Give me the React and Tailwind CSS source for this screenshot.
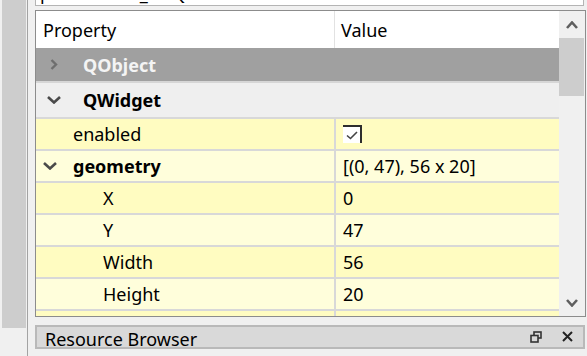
import React from 'react';

const font = { fontFamily: '"Noto Sans", "Liberation Sans", sans-serif' };

function Chevron({ dir = 'down', color = '#4a4a4a', w = 14, h = 8 }) {
  if (dir === 'right') {
    return (
      <svg width="8" height="11" viewBox="0 0 8 11">
        <polyline points="1.5,1 6,5.5 1.5,10" fill="none" stroke={color} strokeWidth="2.4" />
      </svg>
    );
  }
  const pts = dir === 'up' ? `1,${h - 1} ${w / 2},1.5 ${w - 1},${h - 1}` : `1,1 ${w / 2},${h - 1.5} ${w - 1},1`;
  return (
    <svg width={w} height={h} viewBox={`0 0 ${w} ${h}`}>
      <polyline points={pts} fill="none" stroke={color} strokeWidth="2.6" />
    </svg>
  );
}

function CheckBox() {
  return (
    <div className="w-[19px] h-[18px] bg-white border-t-2 border-r-2 border-[#2e2e2e] flex items-end justify-center pb-[3px]">
      <svg width="12" height="9" viewBox="0 0 12 9">
        <polyline points="1,4.5 4.5,7.5 11,1" fill="none" stroke="#444" strokeWidth="1.6" />
      </svg>
    </div>
  );
}

const props = [
  { name: 'enabled', value: <CheckBox />, bg: 'bg-[#fffcc1]', indent: 'pl-[37px]' },
  { name: 'geometry', value: '[(0, 47), 56 x 20]', bg: 'bg-[#fffedb]', bold: true, group: true },
  { name: 'X', value: '0', bg: 'bg-[#fffcc1]', indent: 'pl-[67px]' },
  { name: 'Y', value: '47', bg: 'bg-[#fffedb]', indent: 'pl-[67px]' },
  { name: 'Width', value: '56', bg: 'bg-[#fffcc1]', indent: 'pl-[67px]' },
  { name: 'Height', value: '20', bg: 'bg-[#fffedb]', indent: 'pl-[67px]' },
];

function PropRow({ p }) {
  return (
    <div className={`flex h-[32px] shrink-0 border-b-2 border-[#d8d8d8] ${p.bg}`}>
      <div className={`w-[298px] flex items-center ${p.group ? 'pl-[7px]' : p.indent}`}>
        {p.group && (
          <span className="w-[30px] flex items-center">
            <Chevron dir="down" color="#4a4a4a" w={14} h={8} />
          </span>
        )}
        <span className={p.bold ? 'font-bold' : ''}>{p.name}</span>
      </div>
      <div className="w-[2px] bg-[#d8d8d8]" />
      <div className="flex-1 flex items-center pl-[7px]">{p.value}</div>
    </div>
  );
}

export default function App() {
  return (
    <div className="w-[587px] h-[356px] bg-[#f0f0f0] flex overflow-hidden text-[18px] text-black leading-none" style={font}>
      {/* left dock strip */}
      <div className="w-[2px]" />
      <div className="w-[24px] h-[328px] bg-[#cdcdcd]" />
      <div className="w-[1px]" />
      <div className="w-[1px] h-full bg-[#a3a3a3]" />
      <div className="w-[7px]" />

      <div className="flex flex-col w-[552px]">
        {/* object name box, scrolled away */}
        <div className="h-[6px] w-[549px] border-l border-r border-b border-[#b4b4b4] bg-white overflow-hidden">
          <div className="mt-[-17px] pl-[4px] leading-[20px]">pushButton_2 : QPushButton</div>
        </div>
        <div className="h-[4px]" />

        {/* property editor */}
        <div className="h-[307px] w-[551px] border border-[#8c8c8c] flex">
          <div className="w-[523px] flex flex-col overflow-hidden">
            <div className="flex h-[37px] shrink-0 bg-white">
              <div className="w-[299px] flex items-center pl-[7px] border-r border-[#e2e2e2]">Property</div>
              <div className="flex-1 flex items-center pl-[6px]">Value</div>
            </div>
            <div className="flex items-center h-[35px] shrink-0 bg-[#a0a0a0] border-b-2 border-[#d6d6d6] pl-[14px]">
              <span className="w-[33px] flex items-center">
                <Chevron dir="right" color="#6e6e6e" />
              </span>
              <span className="font-bold text-[#f4f4f4]">QObject</span>
            </div>
            <div className="flex items-center h-[36px] shrink-0 bg-[#efefef] border-b-2 border-[#d8d8d8] pl-[11px]">
              <span className="w-[36px] flex items-center">
                <Chevron dir="down" color="#4a4a4a" w={14} h={8} />
              </span>
              <span className="font-bold">QWidget</span>
            </div>
            {props.map((p) => (
              <PropRow key={p.name} p={p} />
            ))}
            <div className="flex h-[6px] shrink-0 bg-[#fffcc1]">
              <div className="w-[298px]" />
              <div className="w-[2px] bg-[#d8d8d8]" />
            </div>
          </div>

          {/* scrollbar */}
          <div className="w-[26px] bg-[#f0f0f0] flex flex-col">
            <div className="h-[27px] flex items-center justify-center">
              <Chevron dir="up" color="#5f5f5f" w={12} h={8} />
            </div>
            <div className="h-[58px] bg-[#cdcdcd] mr-[1px]" />
            <div className="flex-1" />
            <div className="h-[27px] flex items-center justify-center">
              <Chevron dir="down" color="#5f5f5f" w={12} h={8} />
            </div>
          </div>
        </div>

        <div className="h-[8px]" />

        {/* resource browser dock title */}
        <div className="h-[24px] w-[550px] border-2 border-[#b9b9b9] bg-[#d9d9d9] flex items-end overflow-hidden">
          <span className="pl-[8px] leading-[22px] mb-[-3px]">Resource Browser</span>
          <div className="flex-1" />
          <div className="flex items-center gap-[20px] pr-[10px] pb-[1px] self-center">
            <svg width="12" height="12" viewBox="0 0 12 12">
              <rect x="4" y="1" width="7" height="6" fill="none" stroke="#333" strokeWidth="1.6" />
              <rect x="1" y="4.5" width="7" height="6.5" fill="#d9d9d9" stroke="#333" strokeWidth="1.6" />
            </svg>
            <svg width="11" height="11" viewBox="0 0 11 11">
              <path d="M1 1 L10 10 M10 1 L1 10" stroke="#222" strokeWidth="2" />
            </svg>
          </div>
        </div>
      </div>
    </div>
  );
}
